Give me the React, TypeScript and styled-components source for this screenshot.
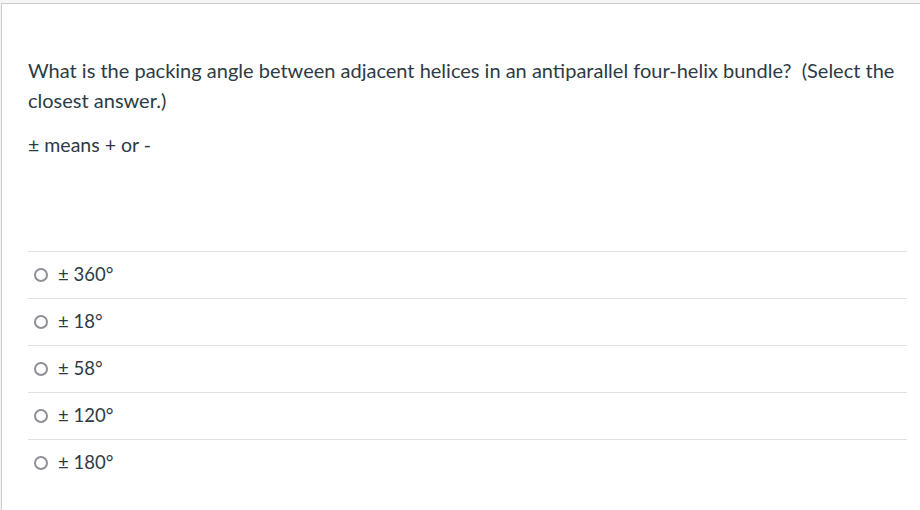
import React from 'react';
import styled, { createGlobalStyle } from 'styled-components';

const GlobalStyle = createGlobalStyle`
  html, body {
    margin: 0;
    padding: 0;
    background: #ffffff;
  }
  body {
    font-family: Lato, "Open Sans", sans-serif;
    color: #2d3b45;
  }
`;

const Page = styled.div`
  padding: 3px 0 0 1px;
  background: #f5f5f5;
  min-height: 510px;
  box-sizing: border-box;
`;

const QuestionBox = styled.div`
  background: #ffffff;
  border-top: 1px solid #c7cdd1;
  border-left: 1px solid #c7cdd1;
  padding: 51px 13px 24px 26px;
  min-height: 506px;
  box-sizing: border-box;
`;

const QuestionText = styled.p`
  margin: 0;
  font-size: 20px;
  line-height: 30px;
`;

const Note = styled.p`
  margin: 17px 0 0;
  font-size: 19.5px;
  line-height: 26px;
`;

const Answers = styled.div`
  margin-top: 93px;
`;

const AnswerRow = styled.label`
  display: flex;
  align-items: center;
  gap: 10px;
  height: 46px;
  padding: 0 0 2px 6px;
  box-sizing: content-box;
  height: 44px;
  border-top: 1px solid #dfe1e3;
  font-size: 18.5px;
  cursor: pointer;
`;

const Radio = styled.span`
  display: inline-block;
  width: 14px;
  height: 14px;
  box-sizing: border-box;
  border: 2px solid #8f8f97;
  border-radius: 50%;
  flex-shrink: 0;
  margin-top: 2px;
`;

const answers = ['± 360°', '± 18°', '± 58°', '± 120°', '± 180°'];

function App() {
  return (
    <>
      <GlobalStyle />
      <Page>
        <QuestionBox>
          <QuestionText>
            What is the packing angle between adjacent helices in an antiparallel four-helix bundle?&nbsp; (Select the
            closest answer.)
          </QuestionText>
          <Note>± means + or -</Note>
          <Answers>
            {answers.map((a) => (
              <AnswerRow key={a}>
                <Radio />
                {a}
              </AnswerRow>
            ))}
          </Answers>
        </QuestionBox>
      </Page>
    </>
  );
}

export default App;
